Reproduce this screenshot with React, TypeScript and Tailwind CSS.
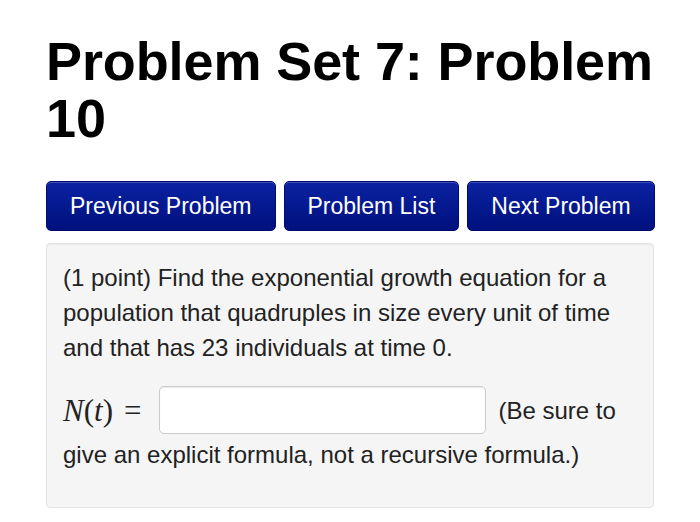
import React from "react";

const NavButton = ({ label }: { label: string }) => (
  <button className="h-[50px] shrink-0 whitespace-nowrap rounded-[5px] border border-[#000c6e] bg-gradient-to-b from-[#0c22a2] to-[#00107e] px-[23px] text-[23px] leading-none text-white shadow-[inset_0_1px_0_rgba(255,255,255,0.2)]">
    {label}
  </button>
);

export default function App() {
  return (
    <div className="min-h-[522px] bg-white px-[46px] pt-[33px] font-['Liberation_Sans',Arial,sans-serif] text-[#222]">
      <h1 className="w-[620px] text-[54px] font-bold leading-[57px] tracking-[-0.1px] text-black">
        Problem Set 7: Problem 10
      </h1>
      <div className="mt-[34px] flex gap-2">
        <NavButton label="Previous Problem" />
        <NavButton label="Problem List" />
        <NavButton label="Next Problem" />
      </div>
      <div className="mt-3 h-[265px] w-[608px] rounded-[4px] border border-[#e3e3e3] bg-[#f5f5f5] px-[16px] pt-[16px] text-[24px] leading-[35px] shadow-[inset_0_1px_1px_rgba(0,0,0,0.05)]">
        <p>
          (1 point) Find the exponential growth equation for a population that
          quadruples in size every unit of time and that has 23 individuals at
          time 0.
        </p>
        <div className="mt-[21px] flex items-center">
          <span className="flex items-center font-['Liberation_Serif','Times_New_Roman',serif] text-[31px]">
            <span>
              <i>N</i>(<i>t</i>)
            </span>
            <span className="ml-[11px]">=</span>
          </span>
          <div className="ml-[18px] h-[48px] w-[327px] rounded-[5px] border border-[#cccccc] bg-white shadow-[inset_0_1px_1px_rgba(0,0,0,0.08)]" />
          <span className="ml-[12px]">(Be sure to</span>
        </div>
        <p className="mt-[3px]">
          give an explicit formula, not a recursive formula.)
        </p>
      </div>
    </div>
  );
}
